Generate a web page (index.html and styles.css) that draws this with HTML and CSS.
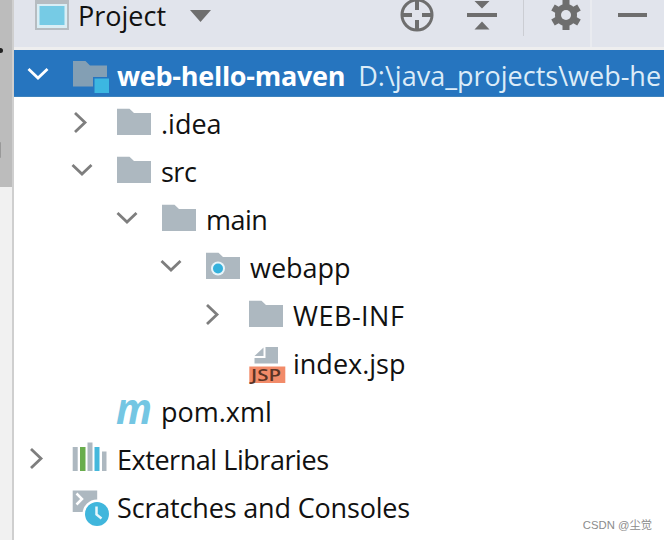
FILE: index.html
```html
<!DOCTYPE html>
<html lang="en">
<head>
<meta charset="utf-8">
<title>Project</title>
<link rel="stylesheet" href="styles.css">
</head>
<body>
<svg class="defs" width="0" height="0">
  <symbol id="down" viewBox="0 0 24 24"><path d="M2.500 5 12 14 21.500 5" fill="none" stroke="currentColor" stroke-width="2.800"/></symbol>
  <symbol id="right" viewBox="0 0 24 24"><path d="M5 1 15 10.500 5 20" fill="none" stroke="currentColor" stroke-width="2.800"/></symbol>
  <symbol id="folder" viewBox="0 0 40 40"><path d="M1 4.700h12.500l4.500 4.300h17v22H1z" fill="#adb8c0"/></symbol>
</svg>
<div class="window">
  <aside class="stripe"><div class="stripe-tab"><i class="mark"></i><i class="mark faint"></i></div></aside>
  <main class="panel">
    <header class="toolbar">
      <svg class="project-icon" width="34" height="36" viewBox="0 0 34 36"><path d="M0 0h34v36H0z" fill="#b6bcc1"/><path d="M2 10h30v24H2z" fill="#d9eef5"/><path d="M4.500 12h25v19h-25z" fill="#76cbe5"/></svg>
      <span class="title">Project</span>
      <svg class="drop" width="22" height="14" viewBox="0 0 22 14"><path d="M0 1h21L10.500 13z" fill="#6e6e6e"/></svg>
      <div class="tools">
        <svg width="34" height="34" viewBox="0 0 34 34"><g fill="none" stroke="#6e6e6e"><circle cx="17" cy="17" r="15" stroke-width="3"/><path d="M17 2v10M17 22v10M2 17h10M22 17h10" stroke-width="4"/></g></svg>
        <svg class="collapse" width="30" height="34" viewBox="0 0 30 34"><path d="M0 15h30v4H0zM7.500 3h15L15 10.500zM7.500 31.500h15L15 23.500z" fill="#6e6e6e"/></svg>
        <i class="divider"></i>
        <svg class="gear" width="32" height="32" viewBox="-16 -16 32 32"><g fill="#6e6e6e"><path d="M-3.500-15h7v30h-7z"/><path d="M-3.500-15h7v30h-7z" transform="rotate(60)"/><path d="M-3.500-15h7v30h-7z" transform="rotate(120)"/><circle r="11"/></g><circle r="5" fill="#e1e4ec"/></svg>
        <i class="seam"></i>
        <i class="minus"></i>
      </div>
    </header>
    <div class="tree">
      <div class="row selected">
        <svg class="arrow"><use href="#down"/></svg>
        <svg class="icon" viewBox="0 0 40 40"><path d="M1 5h12.500l4.500 4.500h17v21H1z" fill="#839fb4"/><path d="M21 21h16v18H21z" fill="#2675bf"/><path d="M22.500 22.500H37V37H22.500z" fill="#3cb7e1"/></svg>
        <span class="name">web-hello-maven</span><span class="path">D:\java_projects\web-he</span>
      </div>
      <div class="row l1"><svg class="arrow"><use href="#right"/></svg><svg class="icon"><use href="#folder"/></svg><span class="t-idea">.idea</span></div>
      <div class="row l1"><svg class="arrow"><use href="#down"/></svg><svg class="icon"><use href="#folder"/></svg><span class="t-src">src</span></div>
      <div class="row l2"><svg class="arrow"><use href="#down"/></svg><svg class="icon"><use href="#folder"/></svg><span class="t-main">main</span></div>
      <div class="row l3"><svg class="arrow"><use href="#down"/></svg><svg class="icon" viewBox="0 0 40 40"><use href="#folder" width="40" height="40"/><circle cx="13" cy="20.500" r="7" fill="#e8f5fa"/><circle cx="13" cy="20.500" r="5" fill="#35b1dc"/></svg><span>webapp</span></div>
      <div class="row l4"><svg class="arrow"><use href="#right"/></svg><svg class="icon"><use href="#folder"/></svg><span class="t-inf">WEB-INF</span></div>
      <div class="row l4"><i class="arrow"></i><svg class="icon" viewBox="0 0 40 40"><path d="M17.500 3H30v16.500H6.500V14h11z" fill="#adb8c0"/><path d="M6.500 12 15.500 3.500V12z" fill="#adb8c0"/><path d="M1.300 22.500h36V39h-36z" fill="#f28b69"/><text x="3" y="37" textLength="30" lengthAdjust="spacingAndGlyphs" class="jsp">JSP</text></svg><span>index.jsp</span></div>
      <div class="row l1"><i class="arrow"></i><svg class="icon" viewBox="0 0 40 40"><text x="0" y="31.500" textLength="36" lengthAdjust="spacingAndGlyphs" class="maven">m</text></svg><span>pom.xml</span></div>
      <div class="row l0"><svg class="arrow"><use href="#right"/></svg><svg class="icon" viewBox="0 0 40 40"><path d="M.7 7h5v24h-5zM15.500 2.500h5V31h-5zM30 11.500h4.500V31H30z" fill="#adb8c0"/><path d="M8 7h5.500v24H8z" fill="#69ad4c"/><path d="M22.500 7h5v24h-5z" fill="#45b8dc"/></svg><span class="t-ext">External Libraries</span></div>
      <div class="row l0"><i class="arrow"></i><svg class="icon" viewBox="0 0 40 40"><path d="M.7 2.500h24.500v21.500H.7z" fill="#adb8c0"/><path d="m4.500 5.500 5.500 5.500-5.500 5.500" fill="none" stroke="#fff" stroke-width="2.500"/><circle cx="25" cy="26" r="14.500" fill="#fff"/><circle cx="25" cy="26" r="12" fill="#40b6dc"/><path d="M24.500 18.500v8l5 4" fill="none" stroke="#e7f7fc" stroke-width="2.500"/></svg><span class="t-scratch">Scratches and Consoles</span></div>
    </div>
    <footer class="credit">CSDN @尘觉</footer>
  </main>
</div>
</body>
</html>
```
FILE: styles.css
```css
* { box-sizing: border-box; }
body {
  margin: 0;
  width: 666px;
  height: 540px;
  overflow: hidden;
  background: #fff;
  color: #111;
  font: 27px/48px "Open Sans", "Noto Sans", sans-serif;
}
svg { flex: none; display: block; overflow: visible; }
.defs { position: absolute; }
.window { display: flex; width: 664px; height: 540px; overflow: hidden; }
.stripe { flex: none; width: 14px; background: #f1f1f1; border-right: 2px solid #cfcfcf; }
.stripe-tab { height: 187px; padding-top: 48px; background: #bcbcbc; }
.mark { display: block; width: 3px; height: 5px; border-radius: 0 3px 3px 0; background: #222; }
.mark.faint { width: 1px; height: 16px; margin-top: 89px; background: #999; }
.panel { flex: 1; min-width: 0; position: relative; }
.toolbar { display: flex; align-items: flex-start; height: 50px; padding-left: 21px; background: #e1e4ec; border-bottom: 3px solid #eeeeef; }
.project-icon { margin-top: -6px; }
.title { width: 89px; margin-left: 9px; line-height: 32px; }
.drop { margin: 9px 0 0 23px; }
.tools { display: flex; align-items: flex-start; margin-left: 188px; }
.tools svg { margin-top: -2px; }
.tools .collapse { margin-left: 33px; }
.divider { width: 1px; height: 36px; margin-left: 26px; background: #cbcdd3; }
.tools .gear { margin: -1px 0 0 26px; }
.seam { width: 2px; height: 47px; margin-left: 8px; background: #e9ebf0; }
.minus { width: 29px; height: 4px; margin: 13px 0 0 26px; background: #6e6e6e; }
.row { display: flex; align-items: center; height: 48px; padding-left: 12px; white-space: pre; }
.l1 { padding-left: 56px; }
.l2 { padding-left: 101px; }
.l3 { padding-left: 145px; }
.l4 { padding-left: 188px; }
.selected { height: 47px; margin-bottom: 3px; padding-top: 5px; color: #fff; background: #2675bf; border-bottom: 1px solid #3e83bd; }
.arrow { flex: none; width: 24px; height: 24px; color: #7e7e7e; }
.selected .arrow { color: #fff; }
.icon { width: 40px; height: 40px; margin: 0 5px 0 22px; }
.name { font-weight: 700; letter-spacing: -0.27px; }
.path { margin-left: 13px; color: #dcecf8; letter-spacing: 0; }
.t-src, .t-main { letter-spacing: -0.5px; }
.t-inf { letter-spacing: 0.5px; }
.t-ext { letter-spacing: -0.45px; }
.t-scratch { letter-spacing: -0.17px; }
.jsp { font: 600 16px "Open Sans", sans-serif; fill: #5b3425; }
.maven { font: italic 700 43px "Open Sans", sans-serif; fill: #74c6e3; }
.credit { position: absolute; right: 12px; bottom: 5px; font: 11.300px/20px "Liberation Sans", "Noto Sans CJK SC", sans-serif; color: #8c8c8c; }
```
